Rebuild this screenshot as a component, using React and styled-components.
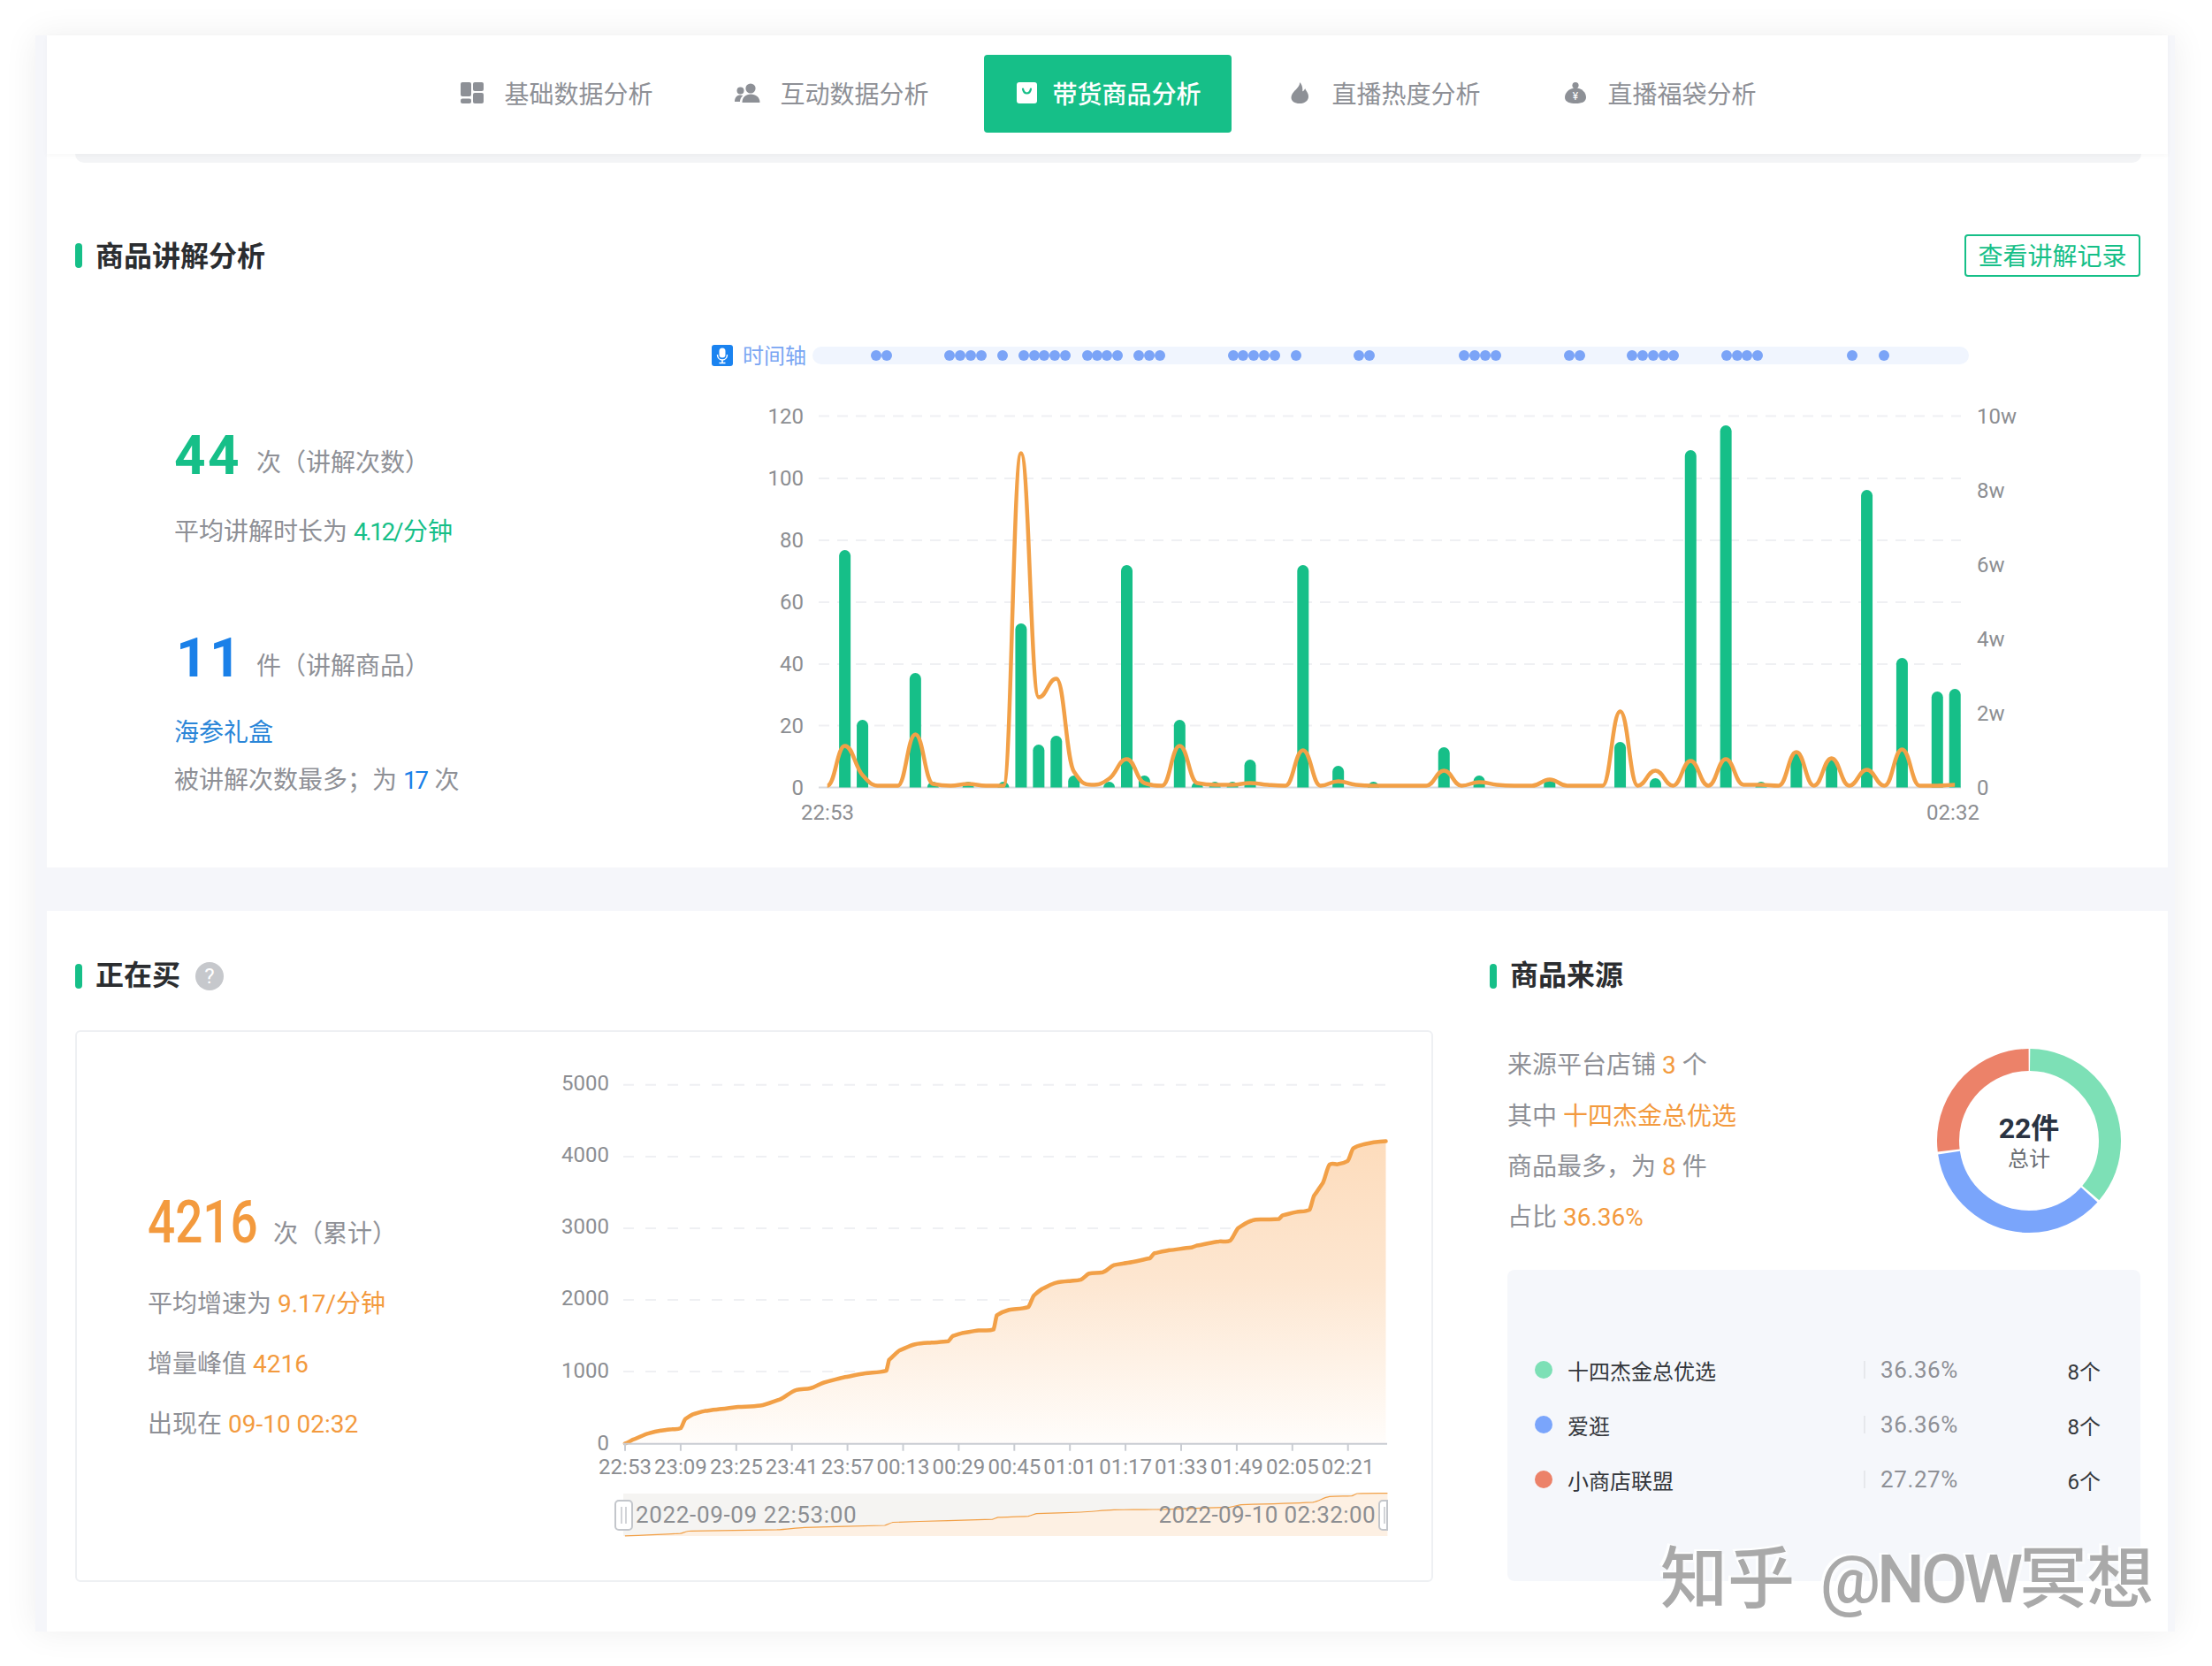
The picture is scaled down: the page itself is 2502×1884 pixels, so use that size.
import React from 'react'
import styled, { createGlobalStyle } from 'styled-components'

const GREEN = '#16bf88'
const ORANGE = '#f39a3e'
const LINE = '#f2a047'
const BLUE = '#1a80e8'
const GRAY = '#8e9096'

const GlobalStyle = createGlobalStyle`
  html, body { margin: 0; padding: 0; background: #fff; }
  body { width: 2502px; height: 1884px; overflow: hidden; font-family: Roboto, "Noto Sans CJK SC", sans-serif; }
`

// pixel centres of the explanation marks on the timeline
const TIME_DOTS = [
  991, 1003, 1074, 1086, 1098, 1110, 1134, 1158, 1170, 1181, 1193, 1205, 1230, 1241, 1252, 1264,
  1288, 1300, 1312, 1395, 1406, 1418, 1430, 1442, 1466, 1537, 1549, 1656, 1668, 1680, 1692,
  1775, 1787, 1846, 1858, 1870, 1882, 1893, 1953, 1965, 1976, 1988, 2095, 2131,
]

const BARS = [
  [1, 622], [2, 814], [5, 761], [6, 884], [8, 884], [10, 884], [11, 705], [12, 842], [13, 832], [14, 877],
  [16, 884], [17, 639], [18, 877], [20, 814], [21, 888], [22, 887], [23, 887], [24, 859], [27, 639],
  [29, 866], [31, 887], [35, 845], [37, 877], [41, 880], [45, 839], [47, 880], [49, 509], [51, 481],
  [53, 887], [55, 849], [57, 856], [59, 554], [61, 744], [63, 782], [64, 779],
]

const HEAT = {
  1: 45, 2: 12, 5: 58, 6: 2, 8: 2, 11: 376, 12: 100, 13: 121, 14: 16, 15: 1, 16: 8, 17: 30, 18: 3, 20: 45, 21: 3,
  22: 1, 23: 1, 24: 3, 25: 1, 27: 40, 29: 5, 30: 1, 35: 17, 37: 4, 38: 1, 41: 7, 45: 84, 47: 17, 49: 28,
  51: 30, 52: 1, 53: 1, 55: 38, 57: 31, 59: 18, 61: 41, 64: 1,
}

const BUY_LINE = [
  [75, 1182], [90, 1170], [118, 1152], [140, 1144], [160, 1140], [176, 1137], [184, 1110], [198, 1096], [220, 1086],
  [250, 1080], [280, 1074], [320, 1070], [355, 1052], [385, 1024], [410, 1019], [435, 1002], [470, 987], [510, 975],
  [548, 967], [553, 935], [572, 907], [600, 889], [630, 884], [660, 880], [668, 865], [685, 856], [715, 848], [742, 845],
  [748, 803], [770, 787], [805, 779], [815, 745], [830, 725], [855, 707], [880, 702], [900, 698], [915, 680], [940, 676],
  [960, 655], [985, 648], [1025, 635], [1033, 620], [1060, 611], [1100, 603], [1110, 597], [1150, 585], [1170, 583],
  [1185, 545], [1210, 523], [1230, 520], [1258, 519], [1265, 508], [1290, 498], [1314, 491], [1322, 450], [1338, 412],
  [1350, 358], [1365, 357], [1383, 347], [1393, 310], [1410, 299], [1430, 292], [1452, 289],
].map(([x, y]) => [x / 1.6 + 660, y / 2.613 + 1180])

const SLIDER_LINE = [
  [75, 1455], [175, 1448], [190, 1441], [350, 1437], [400, 1430], [545, 1424], [560, 1415], [660, 1410], [740, 1406],
  [750, 1400], [805, 1397], [820, 1389], [900, 1385], [960, 1378], [1030, 1377], [1170, 1370], [1190, 1363], [1320, 1356],
  [1350, 1339], [1390, 1337], [1400, 1330], [1455, 1329],
].map(([x, y]) => [x / 1.6 + 660, y / 2.613 + 1180])

const BUY_TICKS = ['22:53', '23:09', '23:25', '23:41', '23:57', '00:13', '00:29', '00:45', '01:01', '01:17', '01:33', '01:49', '02:05', '02:21']

const SOURCES = [
  { name: '十四杰金总优选', pct: '36.36%', count: '8个', color: '#7de0b6' },
  { name: '爱逛', pct: '36.36%', count: '8个', color: '#7aa5fb' },
  { name: '小商店联盟', pct: '27.27%', count: '6个', color: '#ec8269' },
]

const smooth = (pts, maxY = Infinity, k = 0.5) => {
  let d = `M${pts[0][0]} ${pts[0][1]}`
  for (let i = 0; i < pts.length - 1; i++) {
    const p0 = pts[i - 1] || pts[i]
    const p1 = pts[i]
    const p2 = pts[i + 1]
    const p3 = pts[i + 2] || p2
    const c1y = Math.min(p1[1] + ((p2[1] - p0[1]) * k) / 3, maxY)
    const c2y = Math.min(p2[1] - ((p3[1] - p1[1]) * k) / 3, maxY)
    const c1x = p1[0] + (p2[0] - p1[0]) / 3
    const c2x = p2[0] - (p2[0] - p1[0]) / 3
    d += `C${c1x.toFixed(1)} ${c1y.toFixed(1)} ${c2x.toFixed(1)} ${c2y.toFixed(1)} ${p2[0].toFixed(1)} ${p2[1].toFixed(1)}`
  }
  return d
}

// flat tangents at every local peak or dip, which gives the bell shapes of the heat line
const bellPath = (pts) => {
  const slope = (i) => {
    const a = pts[i - 1]
    const b = pts[i]
    const c = pts[i + 1]
    if (!a || !c) return 0
    const d0 = (b[1] - a[1]) / (b[0] - a[0])
    const d1 = (c[1] - b[1]) / (c[0] - b[0])
    if (d0 * d1 <= 0) return 0
    const s = (d0 + d1) / 2
    const limit = 2 * Math.min(Math.abs(d0), Math.abs(d1))
    return Math.sign(s) * Math.min(Math.abs(s), limit)
  }
  let d = `M${pts[0][0]} ${pts[0][1]}`
  for (let i = 0; i < pts.length - 1; i++) {
    const [x1, y1] = pts[i]
    const [x2, y2] = pts[i + 1]
    const h = (x2 - x1) * 0.45
    d += `C${(x1 + h).toFixed(1)} ${(y1 + slope(i) * h).toFixed(1)} ${(x2 - h).toFixed(1)} ${(y2 - slope(i + 1) * h).toFixed(1)} ${x2.toFixed(1)} ${y2.toFixed(1)}`
  }
  return d
}

const Frame = styled.div`
  position: relative;
  box-sizing: border-box;
  margin: 40px 0 0 40px;
  width: 2420px;
  height: 1805px;
  padding: 0 8px 0 13px;
  background: #f5f6fa;
  box-shadow: 0 0 36px rgba(0, 0, 0, 0.07);
`

const TopSection = styled.section`
  height: 941px;
  background: #fff;
`

const Nav = styled.nav`
  position: relative;
  display: flex;
  justify-content: center;
  gap: 32px;
  height: 134px;
  padding-top: 22px;
  box-sizing: border-box;
  background: #fff;
  box-shadow: 0 2px 6px rgba(0, 0, 0, 0.03);
`

const Tab = styled.a`
  display: flex;
  align-items: center;
  gap: ${(p) => (p.$active ? 16 : 24)}px;
  box-sizing: border-box;
  width: 280px;
  height: 88px;
  padding: 0 0 2px ${(p) => (p.$active ? 36 : 32)}px;
  border-radius: 4px;
  font-size: 28px;
  font-weight: ${(p) => (p.$active ? 500 : 400)};
  color: ${(p) => (p.$active ? '#fff' : GRAY)};
  background: ${(p) => (p.$active ? GREEN : 'transparent')};
`

const TabIcon = styled.span`
  display: flex;
  justify-content: center;
  flex: none;
  width: 26px;
  svg { display: block; flex: none; }
`

const NavEdge = styled.div`
  height: 10px;
  margin: 0 30px 0 32px;
  background: #f3f4f6;
  border-radius: 0 0 12px 12px;
`

const Head = styled.div`
  display: flex;
  align-items: center;
  justify-content: space-between;
  height: 48px;
`

const TitleWrap = styled.div`
  display: flex;
  align-items: center;
`

const Title = styled.h3`
  margin: 0;
  padding-left: 23px;
  position: relative;
  height: 48px;
  font-size: 32px;
  line-height: ${(p) => p.$lh || 46}px;
  font-weight: 700;
  color: #2b2d30;
  &::before {
    content: '';
    position: absolute;
    left: 0;
    top: 10px;
    width: 8px;
    height: 28px;
    border-radius: 4px;
    background: ${GREEN};
  }
`

const HelpMark = styled.span`
  width: 32px;
  height: 32px;
  margin-left: 17px;
  border-radius: 50%;
  background: #c6c8cc;
  color: #fff;
  font-size: 24px;
  line-height: 32px;
  text-align: center;
`

const RecordButton = styled.button`
  box-sizing: border-box;
  width: 199px;
  height: 48px;
  padding: 0 0 3px;
  border: 2px solid ${GREEN};
  border-radius: 4px;
  background: #fff;
  color: ${GREEN};
  font-family: inherit;
  font-size: 28px;
`

const ExplainHead = styled(Head)`
  margin: 81px 31px 0 32px;
`

const ExplainBody = styled.div`
  display: flex;
  margin-left: 32px;
`

const ExplainStats = styled.div`
  box-sizing: border-box;
  width: 695px;
  padding: 172px 0 0 112px;
`

const BigRow = styled.div`
  display: flex;
  align-items: baseline;
  height: 60px;
  margin-top: ${(p) => p.$top || 0}px;
`

const BigNumber = styled.span`
  width: 93px;
  padding-left: ${(p) => p.$indent || 0}px;
  box-sizing: border-box;
  font-size: 62px;
  line-height: 60px;
  font-weight: 700;
  letter-spacing: 2.5px;
  color: ${(p) => p.$color};
`

const Unit = styled.span`
  font-size: 28px;
  color: ${GRAY};
  transform: translateY(${(p) => p.$lift || 0}px);
`

const StatLine = styled.div`
  height: 40px;
  margin-top: ${(p) => p.$top || 0}px;
  font-size: 28px;
  line-height: 40px;
  color: ${GRAY};
`

const Hi = styled.span`
  color: ${(p) => p.$color};
`

// the figures of the top block are narrower than the rest of the text
const TightNum = styled.span`
  letter-spacing: -2.4px;
  margin-right: 2px;
`

const ChartSide = styled.div`
  width: 1520px;
`

const Timeline = styled.div`
  display: flex;
  align-items: center;
  height: 24px;
  margin: 77px 0 0 25px;
  font-size: 24px;
  color: #7aa6f3;
  svg { display: block; flex: none; }
`

const TimelineLabel = styled.span`
  width: 71px;
  margin: 0 8px 0 11px;
  padding-bottom: 3px;
  white-space: nowrap;
`

const Track = styled.div`
  display: flex;
  align-items: center;
  width: 1308px;
  height: 20px;
  border-radius: 10px;
  background: #f0f5fe;
`

const TrackDot = styled.i`
  flex: none;
  width: 12px;
  height: 12px;
  border-radius: 50%;
  background: #7ba4f7;
`

const ChartSvg = styled.svg`
  display: block;
  margin-top: ${(p) => p.$top || 0}px;
`

const AxisText = styled.text`
  font-family: Roboto, "Noto Sans CJK SC", sans-serif;
  font-size: ${(p) => p.$size || 24}px;
  letter-spacing: ${(p) => p.$track || 0}px;
  fill: #8c8e92;
`

const LowerSection = styled.div`
  display: flex;
  height: 815px;
  margin-top: 49px;
  padding: 50px 32px 0;
  box-sizing: border-box;
  background: #fff;
`

const BuyColumn = styled.div`
  width: 1536px;
  flex: none;
`

const BuyCard = styled.div`
  display: flex;
  box-sizing: border-box;
  height: 624px;
  margin-top: 37px;
  border: 2px solid #eef0f3;
  border-radius: 6px;
`

const BuyStats = styled.div`
  box-sizing: border-box;
  width: 533px;
  flex: none;
  padding: 181px 0 0 80px;
`

const BuyBigRow = styled.div`
  display: flex;
  align-items: baseline;
  height: 70px;
  gap: 18px;
`

// condensed digits: the number keeps its height but takes the narrower width of the original face
const BuyNumber = styled.span`
  display: inline-block;
  font-size: 66px;
  line-height: 70px;
  font-weight: 500;
  color: ${ORANGE};
  transform: scaleX(0.83);
  transform-origin: left center;
  margin-right: -26px;
`

const SourceColumn = styled.div`
  flex: 1;
  margin-left: 64px;
`

const SourceTop = styled.div`
  display: flex;
  align-items: center;
  justify-content: space-between;
  box-sizing: border-box;
  height: 271px;
  margin: 37px 0 0 20px;
  padding: 0 21px 22px 0;
`

const SourceLines = styled.div`
  padding-top: 3px;
`

const SourceLine = styled.div`
  font-size: 28px;
  line-height: 57.3px;
  color: ${GRAY};
`

const LegendPanel = styled.div`
  display: flex;
  flex-direction: column;
  justify-content: center;
  box-sizing: border-box;
  width: 716px;
  height: 352px;
  margin-left: 20px;
  padding: 0 45px 2px 31px;
  border-radius: 8px;
  background: #f5f7fb;
`

const LegendRow = styled.div`
  display: flex;
  align-items: center;
  height: 62px;
  font-size: 24px;
  color: #34373c;
`

const LegendDot = styled.i`
  width: 20px;
  height: 20px;
  margin-right: 17px;
  border-radius: 50%;
  background: ${(p) => p.$color};
`

const LegendName = styled.span`
  width: 335px;
`

const LegendPct = styled.span`
  padding-left: 17px;
  border-left: 2px solid #e6e8ec;
  font-size: 26px;
  letter-spacing: 0.6px;
  line-height: 20px;
  color: ${GRAY};
`

const LegendCount = styled.span`
  margin-left: auto;
`

const Watermark = styled.div`
  position: absolute;
  left: 1838px;
  top: 1696px;
  font-size: 76px;
  line-height: 100px;
  font-weight: 500;
  word-spacing: 10px;
  white-space: nowrap;
  color: #a9a9a9;
  text-shadow: -3px -2px 0 rgba(255, 255, 255, 0.9), 3px 3px 0 rgba(255, 255, 255, 0.5);
`

const WatermarkLatin = styled.span`
  letter-spacing: -4px;
`

const GridIcon = () => (
  <svg width="26" height="24" viewBox="0 0 26 24" fill="#8d9096">
    <rect x="0" y="0" width="12" height="16" rx="2" />
    <rect x="0" y="18.5" width="12" height="5.5" rx="2" />
    <rect x="14" y="0" width="12" height="10" rx="2" />
    <rect x="14" y="12" width="12" height="12" rx="2" />
  </svg>
)

const PeopleIcon = () => (
  <svg width="29" height="22" viewBox="0 0 29 22" fill="#8d9096">
    <circle cx="18" cy="6" r="5.6" />
    <path d="M8.5 22c0-6 4-9.4 9.7-9.4S28.5 16 28.5 22z" />
    <circle cx="6.5" cy="8.5" r="4" />
    <path d="M0 21c0-5 2.6-7.6 6.4-7.6 1 0 2 .2 2.9.6-2 1.7-3.1 4-3.4 7z" />
  </svg>
)

const BagIcon = () => (
  <svg width="23" height="24" viewBox="0 0 23 24">
    <path d="M3 0h17a3 3 0 0 1 3 3v18a3 3 0 0 1-3 3H3a3 3 0 0 1-3-3V3a3 3 0 0 1 3-3z" fill="#fff" />
    <path d="M7 7.5c.6 3.4 2.4 5 4.5 5s3.900-1.600 4.500-5" fill="none" stroke={GREEN} strokeWidth="2.2" strokeLinecap="round" />
  </svg>
)

const FlameIcon = () => (
  <svg width="22" height="24" viewBox="0 0 22 24" fill="#8d9096">
    <path d="M11 0c.8 5-5.200 8-8.200 13C-.8 19 3.500 24 11 24s11.600-5 9.400-11c-1-2.700-2.600-4-3.200-6-.8 2-1.800 3-3 3.300C14.800 6 13.500 2 11 0z" />
  </svg>
)

const MoneyBagIcon = () => (
  <svg width="24" height="24" viewBox="0 0 24 24">
    <circle cx="12" cy="3.600" r="3.600" fill="#8d9096" />
    <path d="M12 6.500C5 6.500 0 11.500 0 17c0 4.500 4 7 12 7s12-2.500 12-7c0-5.500-5-10.500-12-10.500z" fill="#8d9096" />
    <text x="12" y="20" textAnchor="middle" fontSize="12" fill="#fff" fontFamily="Roboto, sans-serif">¥</text>
  </svg>
)

const MicIcon = () => (
  <svg width="24" height="24" viewBox="0 0 24 24">
    <rect width="24" height="24" rx="3" fill="#1a83f0" />
    <rect x="8.500" y="3.500" width="7" height="11" rx="3.500" fill="#fff" />
    <path d="M6.500 11c0 3.600 2.400 6 5.500 6s5.500-2.400 5.500-6" fill="none" stroke="#fff" strokeWidth="1.400" />
    <path d="M12 17v3M8.500 20.500h7" stroke="#fff" strokeWidth="1.600" />
  </svg>
)

const TABS = [
  { label: '基础数据分析', icon: <GridIcon /> },
  { label: '互动数据分析', icon: <PeopleIcon /> },
  { label: '带货商品分析', icon: <BagIcon />, active: true },
  { label: '直播热度分析', icon: <FlameIcon /> },
  { label: '直播福袋分析', icon: <MoneyBagIcon /> },
]

const TimeTrack = () => (
  <Track>
    {TIME_DOTS.map((c, i) => {
      const prevEnd = i === 0 ? 919 : TIME_DOTS[i - 1] + 6
      return <TrackDot key={i} style={{ marginLeft: c - 6 - prevEnd }} />
    })}
  </Track>
)

const ExplainChart = () => {
  const base = 890.5
  const xAt = (i) => 935.7 + i * 19.93
  const linePts = Array.from({ length: 65 }, (_, i) => [xAt(i), base - 2 - (HEAT[i] || 0)])
  return (
    <ChartSvg $top={6} width="1520" height="520" viewBox="780 420 1520 520">
      {[470.6, 541, 611, 681, 751, 820.6].map((y) => (
        <line key={y} x1="926" x2="2218" y1={y} y2={y} stroke="#eff0f3" strokeWidth="2" strokeDasharray="12 9" />
      ))}
      <line x1="926" x2="2218" y1={base} y2={base} stroke="#d8dade" strokeWidth="2" />
      {BARS.map(([i, top]) => (
        <path
          key={i}
          fill={GREEN}
          d={`M${xAt(i) - 6.5} ${base}V${Math.min(top + 6.5, base)}a6.5 6.5 0 0 1 13 0V${base}z`}
        />
      ))}
      <path d={bellPath(linePts)} fill="none" stroke={LINE} strokeWidth="4.5" strokeLinejoin="round" />
      {['120', '100', '80', '60', '40', '20', '0'].map((t, i) => (
        <AxisText key={t} x="909" y={[479, 549, 619, 689, 759, 829, 899][i]} textAnchor="end">{t}</AxisText>
      ))}
      {['10w', '8w', '6w', '4w', '2w', '0'].map((t, i) => (
        <AxisText key={t} x="2236" y={[479, 563, 647, 731, 815, 899][i]}>{t}</AxisText>
      ))}
      <AxisText x="936" y="927" textAnchor="middle">22:53</AxisText>
      <AxisText x="2209" y="927" textAnchor="middle">02:32</AxisText>
    </ChartSvg>
  )
}

const BuyChart = () => {
  const base = 1632.7
  const line = smooth(BUY_LINE, base, 0.4)
  const slider = smooth(SLIDER_LINE, 1737, 0.4)
  return (
    <ChartSvg $top={21} width="999" height="590" viewBox="620 1188 999 590">
      <defs>
        <linearGradient id="buyFill" x1="0" y1="0" x2="0" y2="1">
          <stop offset="0" stopColor="#fddcbc" />
          <stop offset="0.45" stopColor="#fde6d0" />
          <stop offset="1" stopColor="#fffdfb" />
        </linearGradient>
      </defs>
      {[1226.7, 1308, 1389, 1470, 1551].map((y) => (
        <line key={y} x1="705" x2="1569" y1={y} y2={y} stroke="#eff0f3" strokeWidth="2" strokeDasharray="12 13" />
      ))}
      {['5000', '4000', '3000', '2000', '1000', '0'].map((t, i) => (
        <AxisText key={t} x="689" y={[1233, 1314, 1395, 1476, 1558, 1640][i]} textAnchor="end">{t}</AxisText>
      ))}
      <path d={`${line}V${base}H${BUY_LINE[0][0]}z`} fill="url(#buyFill)" />
      <path d={line} fill="none" stroke={LINE} strokeWidth="4.5" strokeLinejoin="round" strokeLinecap="round" />
      <line x1="705" x2="1569" y1={base} y2={base} stroke="#c9ccd2" strokeWidth="2" />
      {BUY_TICKS.map((t, i) => {
        const x = 707 + i * 62.9
        return (
          <g key={t}>
            <line x1={x} x2={x} y1={base} y2={base + 8} stroke="#c9ccd2" strokeWidth="2" />
            <AxisText x={x} y="1667" textAnchor="middle">{t}</AxisText>
          </g>
        )
      })}
      <rect x="705" y="1689" width="864" height="48" fill="#f5f4f2" />
      <path d={`${slider}V1737H${SLIDER_LINE[0][0]}z`} fill="#fdf0e3" />
      <path d={slider} fill="none" stroke={LINE} strokeWidth="1.2" />
      <AxisText x="719" y="1722" $size={26} $track={0.65}>2022-09-09 22:53:00</AxisText>
      <AxisText x="1556" y="1722" $size={26} $track={0.4} textAnchor="end">2022-09-10 02:32:00</AxisText>
      <rect x="696" y="1697" width="19" height="33" rx="4" fill="#fff" stroke="#c3c6cb" strokeWidth="2" />
      <path d="M703 1704v19M708 1704v19" stroke="#c3c6cb" strokeWidth="1.500" />
      <path d="M1569 1697h-5a4 4 0 0 0-4 4v25a4 4 0 0 0 4 4h5z" fill="#fff" stroke="#c3c6cb" strokeWidth="2" />
      <path d="M1566 1704v19" stroke="#c3c6cb" strokeWidth="1.500" />
    </ChartSvg>
  )
}

const SourceDonut = () => {
  const r = 91.5
  const len = 2 * Math.PI * r
  const shares = [[0.3636, '#7de0b6'], [0.3636, '#7aa5fb'], [0.2728, '#ec8269']]
  let acc = 0
  return (
    <svg width="210" height="210" viewBox="0 0 210 210" style={{ display: 'block' }}>
      <g transform="rotate(-90 105 105)">
        {shares.map(([s, color]) => {
          const seg = (
            <circle
              key={color}
              cx="105"
              cy="105"
              r={r}
              fill="none"
              stroke={color}
              strokeWidth="25"
              strokeDasharray={`${len * s - 2.500} ${len}`}
              strokeDashoffset={-len * acc - 1.200}
            />
          )
          acc += s
          return seg
        })}
      </g>
      <text x="105" y="102" textAnchor="middle" fontSize="32" fontWeight="700" fill="#2a3342" fontFamily='Roboto, "Noto Sans CJK SC", sans-serif'>22件</text>
      <text x="105" y="134" textAnchor="middle" fontSize="24" fill="#6a6d72" fontFamily='Roboto, "Noto Sans CJK SC", sans-serif'>总计</text>
    </svg>
  )
}

export default function App() {
  return (
    <>
      <GlobalStyle />
      <Frame>
        <TopSection>
          <Nav>
            {TABS.map((t) => (
              <Tab key={t.label} $active={t.active}>
                <TabIcon>{t.icon}</TabIcon>
                {t.label}
              </Tab>
            ))}
          </Nav>
          <NavEdge />
          <ExplainHead>
            <Title $lh={50}>商品讲解分析</Title>
            <RecordButton>查看讲解记录</RecordButton>
          </ExplainHead>
          <ExplainBody>
            <ExplainStats>
              <BigRow>
                <BigNumber $color={GREEN}>44</BigNumber>
                <Unit $lift={-3}>次（讲解次数）</Unit>
              </BigRow>
              <StatLine $top={37}>平均讲解时长为 <Hi $color={GREEN}><TightNum>4.12/</TightNum>分钟</Hi></StatLine>
              <BigRow $top={92}>
                <BigNumber $color={BLUE} $indent={2}>11</BigNumber>
                <Unit $lift={-2}>件（讲解商品）</Unit>
              </BigRow>
              <StatLine $top={35}><Hi $color="#2a86d8">海参礼盒</Hi></StatLine>
              <StatLine $top={14}>被讲解次数最多；为 <Hi $color={BLUE}><TightNum>17</TightNum></Hi> 次</StatLine>
            </ExplainStats>
            <ChartSide>
              <Timeline>
                <MicIcon />
                <TimelineLabel>时间轴</TimelineLabel>
                <TimeTrack />
              </Timeline>
              <ExplainChart />
            </ChartSide>
          </ExplainBody>
        </TopSection>
        <LowerSection>
          <BuyColumn>
            <Head>
              <TitleWrap>
                <Title>正在买</Title>
                <HelpMark>?</HelpMark>
              </TitleWrap>
            </Head>
            <BuyCard>
              <BuyStats>
                <BuyBigRow>
                  <BuyNumber>4216</BuyNumber>
                  <Unit>次（累计）</Unit>
                </BuyBigRow>
                <StatLine $top={37}>平均增速为 <Hi $color={ORANGE}>9.17/分钟</Hi></StatLine>
                <StatLine $top={28}>增量峰值 <Hi $color={ORANGE}>4216</Hi></StatLine>
                <StatLine $top={28}>出现在 <Hi $color={ORANGE}>09-10 02:32</Hi></StatLine>
              </BuyStats>
              <BuyChart />
            </BuyCard>
          </BuyColumn>
          <SourceColumn>
            <Head>
              <Title>商品来源</Title>
            </Head>
            <SourceTop>
              <SourceLines>
                <SourceLine>来源平台店铺 <Hi $color={ORANGE}>3</Hi> 个</SourceLine>
                <SourceLine>其中 <Hi $color={ORANGE}>十四杰金总优选</Hi></SourceLine>
                <SourceLine>商品最多，为 <Hi $color={ORANGE}>8</Hi> 件</SourceLine>
                <SourceLine>占比 <Hi $color={ORANGE}>36.36%</Hi></SourceLine>
              </SourceLines>
              <SourceDonut />
            </SourceTop>
            <LegendPanel>
              {SOURCES.map((s) => (
                <LegendRow key={s.name}>
                  <LegendDot $color={s.color} />
                  <LegendName>{s.name}</LegendName>
                  <LegendPct>{s.pct}</LegendPct>
                  <LegendCount>{s.count}</LegendCount>
                </LegendRow>
              ))}
            </LegendPanel>
          </SourceColumn>
        </LowerSection>
        <Watermark>知乎 <WatermarkLatin>@NOW</WatermarkLatin>冥想</Watermark>
      </Frame>
    </>
  )
}
